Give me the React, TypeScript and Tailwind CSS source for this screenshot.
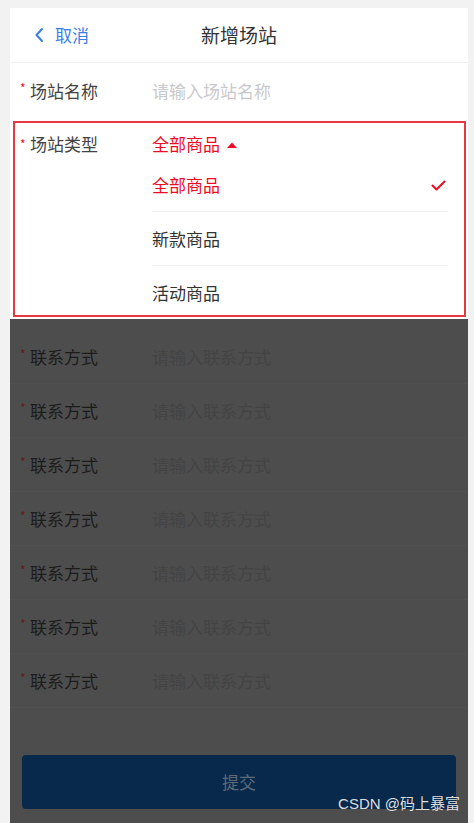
import React from "react";

const font = { fontFamily: '"Noto Sans CJK SC", "Noto Sans", sans-serif' };

function Star({ dim }: { dim?: boolean }) {
  return (
    <span
      className={`w-[10px] text-[12px] leading-none mb-[6px] ${dim ? "text-[#5e1c1c]" : "text-[#ee0a24]"}`}
    >
      *
    </span>
  );
}

export default function App() {
  const masked = Array.from({ length: 7 });
  return (
    <div className="w-[474px] h-[823px] bg-[#f2f2f2] pl-[10px] pr-[6px] pt-[8px]" style={font}>
      <div className="relative h-full bg-white flex flex-col overflow-hidden">
        {/* header */}
        <div className="h-[55px] shrink-0 border-b border-[#f0f0f0] grid grid-cols-[1fr_auto_1fr] items-center">
          <div className="flex items-center pl-[24px] text-[#3a7ee8] text-[17px]">
            <svg width="11" height="16" viewBox="0 0 11 16" className="mr-[10px]">
              <path d="M8 2 L2.5 8 L8 14" fill="none" stroke="#3a7ee8" strokeWidth="2" strokeLinecap="round" strokeLinejoin="round" />
            </svg>
            <span>取消</span>
          </div>
          <div className="text-[19px] text-[#333]">新增场站</div>
          <div />
        </div>

        {/* row 1 */}
        <div className="h-[55px] shrink-0 flex items-center px-[10px] text-[17px]">
          <Star />
          <span className="w-[122px] text-[#444]">场站名称</span>
          <span className="text-[#c8c9cc]">请输入场站名称</span>
        </div>

        {/* row 2 with dropdown */}
        <div className="shrink-0 flex px-[10px] text-[17px]">
          <div className="flex items-start pt-[14px]">
            <span className="w-[10px] text-[12px] leading-none text-[#ee0a24] mt-[6px]">*</span>
            <span className="w-[122px] text-[#444] leading-[24px]">场站类型</span>
          </div>
          <div className="flex-1 flex flex-col pr-[10px]">
            <div className="h-[41px] pt-[14px] flex items-start">
              <span className="text-[#ee0a24] leading-[24px]">全部商品</span>
              <svg width="10" height="6" viewBox="0 0 10 6" className="ml-[7px] mt-[10px]">
                <path d="M0 6 L5 0.5 L10 6 Z" fill="#ee0a24" />
              </svg>
            </div>
            <div className="h-[52px] flex items-center justify-between">
              <span className="text-[#ee0a24]">全部商品</span>
              <svg width="15" height="11" viewBox="0 0 15 11" className="mr-[2px]">
                <path d="M1.5 5.5 L5.5 9.5 L13.5 1.5" fill="none" stroke="#ee0a24" strokeWidth="2" strokeLinecap="round" strokeLinejoin="round" />
              </svg>
            </div>
            <div className="h-[54px] border-t border-[#f0f0f0] flex items-center text-[#333]">新款商品</div>
            <div className="h-[54px] border-t border-[#f0f0f0] flex items-center text-[#333]">活动商品</div>
          </div>
        </div>

        {/* masked section */}
        <div className="flex-1 bg-[#4d4d4d] flex flex-col pt-[11px]">
          {masked.map((_, i) => (
            <div key={i} className="h-[54px] shrink-0 border-b border-[#505050] flex items-center px-[10px] text-[17px]">
              <Star dim />
              <span className="w-[122px] text-[#1c1c1c]">联系方式</span>
              <span className="text-[#444444]">请输入联系方式</span>
            </div>
          ))}
          <div className="mt-[47px] mx-[12px] h-[54px] rounded-[4px] bg-[#08294b] flex items-center justify-center text-[17px] text-[#5e6a78]">
            提交
          </div>
        </div>

        {/* annotation box */}
        <div className="absolute left-[3px] top-[113px] w-[453px] h-[196px] border-2 border-[#e53940] pointer-events-none" />

        {/* watermark */}
        <div
          className="absolute right-[8px] bottom-[8px] text-[15px] text-[#dedede]"
          style={{ fontFamily: '"Liberation Sans", "Noto Sans CJK SC", sans-serif' }}
        >
          CSDN @码上暴富
        </div>
      </div>
    </div>
  );
}
